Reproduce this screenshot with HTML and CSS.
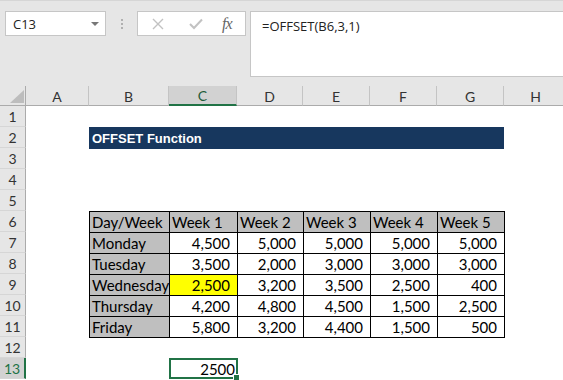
FILE: index.html
```html
<!DOCTYPE html>
<html lang="en">
<head>
    <meta charset="UTF-8">
    <meta name="viewport" content="width=device-width, initial-scale=1.0">
    <title>OFFSET Function</title>
    <link rel="stylesheet" href="styles.css">
</head>
<body>
    <div class="toolbar">
        <div class="namebox">
            <span>C13</span>
            <span class="caret"></span>
        </div>
        <div class="grip"><i></i><i></i><i></i></div>
        <div class="fxbox">
            <svg class="icon cancel" width="12" height="12" viewBox="0 0 12 12">
                <path d="M1 1 L11 11 M11 1 L1 11" stroke="#c2c2c2" stroke-width="1.4" fill="none"/>
            </svg>
            <svg class="icon enter" width="14" height="12" viewBox="0 0 14 12">
                <path d="M1 6 L5 10 L13 1.5" stroke="#c2c2c2" stroke-width="2" fill="none"/>
            </svg>
            <span class="fx">fx</span>
        </div>
        <div class="formula">=OFFSET(B6,3,1)</div>
    </div>

    <div class="sheet">
        <div class="corner">
            <svg width="26" height="20" viewBox="0 0 26 20">
                <polygon points="10,17 24,17 24,4" fill="#bdbdbd"/>
            </svg>
        </div>
        <div class="colheads">
            <div>A</div>
            <div>B</div>
            <div class="selected">C</div>
            <div>D</div>
            <div>E</div>
            <div>F</div>
            <div>G</div>
            <div>H</div>
        </div>

        <div class="rowheads">
            <div>1</div>
            <div>2</div>
            <div>3</div>
            <div>4</div>
            <div>5</div>
            <div>6</div>
            <div>7</div>
            <div>8</div>
            <div>9</div>
            <div>10</div>
            <div>11</div>
            <div>12</div>
            <div class="selected">13</div>
        </div>

        <div class="cells">
            <div class="title">OFFSET Function</div>

            <div class="data">
                <div class="head">Day/Week</div>
                <div class="head">Week 1</div>
                <div class="head">Week 2</div>
                <div class="head">Week 3</div>
                <div class="head">Week 4</div>
                <div class="head">Week 5</div>

                <div class="head">Monday</div>
                <div class="num">4,500</div>
                <div class="num">5,000</div>
                <div class="num">5,000</div>
                <div class="num">5,000</div>
                <div class="num">5,000</div>

                <div class="head">Tuesday</div>
                <div class="num">3,500</div>
                <div class="num">2,000</div>
                <div class="num">3,000</div>
                <div class="num">3,000</div>
                <div class="num">3,000</div>

                <div class="head">Wednesday</div>
                <div class="num hit">2,500</div>
                <div class="num">3,200</div>
                <div class="num">3,500</div>
                <div class="num">2,500</div>
                <div class="num">400</div>

                <div class="head">Thursday</div>
                <div class="num">4,200</div>
                <div class="num">4,800</div>
                <div class="num">4,500</div>
                <div class="num">1,500</div>
                <div class="num">2,500</div>

                <div class="head">Friday</div>
                <div class="num">5,800</div>
                <div class="num">3,200</div>
                <div class="num">4,400</div>
                <div class="num">1,500</div>
                <div class="num">500</div>
            </div>

            <div class="active">2500<span class="handle"></span></div>
        </div>
    </div>
</body>
</html>
```

FILE: styles.css
```css
body {
    margin: 0;
    width: 563px;
    height: 380px;
    overflow: hidden;
    background-color: #fff;
    font-family: Lato, "Liberation Sans", sans-serif;
    color: #000;
}

/* formula bar */

.toolbar {
    display: flex;
    align-items: flex-start;
    height: 86px;
    box-sizing: border-box;
    padding-top: 11px;
    background-color: #e6e6e6;
    border-top: 1px solid #d6d6d6;
}

.namebox {
    display: flex;
    align-items: center;
    justify-content: space-between;
    width: 101px;
    height: 25px;
    box-sizing: border-box;
    margin-top: -1px;
    margin-left: 5px;
    padding: 0 6px 0 7px;
    background-color: #fff;
    border: 1px solid #c6c6c6;
    font-family: "Open Sans", sans-serif;
    font-size: 13px;
    color: #222;
}

.caret {
    width: 0;
    height: 0;
    border-left: 4px solid transparent;
    border-right: 4px solid transparent;
    border-top: 4px solid #777;
}

.grip {
    display: flex;
    flex-direction: column;
    align-items: center;
    gap: 2px;
    width: 31px;
    padding-top: 7px;
}

.grip i {
    width: 2px;
    height: 2px;
    background-color: #b0b0b0;
}

.fxbox {
    display: flex;
    align-items: center;
    width: 109px;
    height: 25px;
    box-sizing: border-box;
    margin-top: -1px;
    background-color: #fff;
    border: 1px solid #c6c6c6;
}

.icon {
    display: block;
}

.cancel {
    margin-left: 14px;
}

.enter {
    margin-left: 25px;
}

.fx {
    margin-left: 19px;
    font-family: "Liberation Serif", serif;
    font-style: italic;
    font-size: 16px;
    color: #666;
    letter-spacing: -1px;
}

.formula {
    flex: 1;
    height: 66px;
    box-sizing: border-box;
    margin-top: -1px;
    margin-left: 4px;
    margin-right: -3px;
    padding: 5px 0 0 11px;
    background-color: #fff;
    border: 1px solid #c6c6c6;
    font-family: "Open Sans", sans-serif;
    font-size: 13px;
    color: #222;
}

/* sheet */

.sheet {
    display: grid;
    grid-template-columns: 26px 540px;
    grid-template-rows: 20px auto;
}

.corner {
    background-color: #e6e6e6;
    border-bottom: 1px solid #ababab;
    border-right: 1px solid #ababab;
    box-sizing: border-box;
}

.corner svg {
    display: block;
}

.colheads {
    display: grid;
    grid-template-columns: 63px 80px 68px 66px 67px 67px 67px 64px;
    background-color: #e6e6e6;
}

.colheads div,
.rowheads div {
    display: flex;
    align-items: center;
    justify-content: center;
    box-sizing: border-box;
    font-size: 14px;
    color: #333;
}

.colheads div {
    height: 20px;
    border-right: 1px solid #c4c4c4;
    border-bottom: 1px solid #ababab;
    padding-top: 1px;
}

.colheads .selected {
    background-color: #d2d2d2;
    border-bottom: 2px solid #217346;
    color: #1e5c3a;
}

.rowheads {
    display: flex;
    flex-direction: column;
    background-color: #e6e6e6;
}

.rowheads div {
    height: 21px;
    border-bottom: 1px solid #d6d6d6;
    border-right: 1px solid #ababab;
}

.rowheads .selected {
    background-color: #d2d2d2;
    border-right: 2px solid #217346;
    color: #217346;
}

.cells {
    display: grid;
    grid-template-columns: 63px 80px 68px 66px 67px 67px 67px 62px;
    grid-template-rows: repeat(13, 21px);
}

.title {
    grid-row: 2;
    grid-column: 2 / 8;
    align-self: start;
    height: 22px;
    display: flex;
    align-items: center;
    padding-left: 3px;
    background-color: #17375e;
    color: #fff;
    font-family: "Liberation Sans", sans-serif;
    font-weight: bold;
    font-size: 13px;
}

.data {
    grid-row: 6 / 12;
    grid-column: 2 / 8;
    justify-self: start;
    align-self: start;
    display: grid;
    grid-template-columns: 79px 67px 65px 66px 66px 66px;
    grid-auto-rows: 20px;
    gap: 1px;
    background-color: #000;
    border: 1px solid #000;
    font-size: 15px;
}

.data div {
    display: flex;
    align-items: center;
    background-color: #fff;
    white-space: nowrap;
    overflow: hidden;
}

.data .head {
    background-color: #bfbfbf;
    padding-left: 2px;
}

.data .num {
    justify-content: flex-end;
    padding-right: 7px;
}

.data .hit {
    background-color: #ffff00;
}

.active {
    grid-row: 13;
    grid-column: 3;
    position: relative;
    display: flex;
    align-items: center;
    justify-content: flex-end;
    margin-right: -1px;
    padding-right: 1px;
    border: 2px solid #217346;
    font-size: 15px;
}

.handle {
    position: absolute;
    right: -4px;
    bottom: -4px;
    width: 5px;
    height: 5px;
    background-color: #217346;
    border: 1px solid #fff;
}
```
